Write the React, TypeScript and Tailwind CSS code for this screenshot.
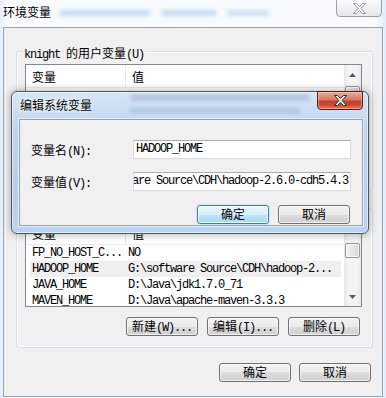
import React from 'react';

const zh = "font-['Noto_Sans_CJK_SC',sans-serif] text-[12px]";
const mono = "font-['Liberation_Mono','Noto_Sans_CJK_SC',monospace] text-[12px] tracking-[-1.2px]";

type Row = { name: string; value: string };

// rows of the user list sit under the edit dialog, nothing of them shows
const userRows: Row[] = [];

const systemRows: Row[] = [
  { name: 'FP_NO_HOST_C...', value: 'NO' },
  { name: 'HADOOP_HOME', value: 'G:\\software Source\\CDH\\hadoop-2...' },
  { name: 'JAVA_HOME', value: 'D:\\Java\\jdk1.7.0_71' },
  { name: 'MAVEN_HOME', value: 'D:\\Java\\apache-maven-3.3.3' },
];

function Label({ cn, en }: { cn: string; en: string }) {
  return (
    <span className={`${zh} leading-[16px] text-black whitespace-nowrap`}>
      {cn}
      <span className={mono}>{en}</span>
    </span>
  );
}

function Btn({ children, primary }: { children: React.ReactNode; primary?: boolean }) {
  return (
    <div
      className={
        primary
          ? 'h-[19px] w-[72px] rounded-[3px] border border-[#3c7fb1] flex items-center justify-center bg-[linear-gradient(to_bottom,#eaf6fd_0%,#d9f0fc_50%,#bee6fd_50%,#a7d9f5_100%)] shadow-[inset_0_0_0_1px_rgba(255,255,255,0.85),0_0_2px_#8fcdf1]'
          : 'h-[19px] w-[72px] rounded-[3px] border border-[#707070] flex items-center justify-center bg-[linear-gradient(to_bottom,#f2f2f2_0%,#ebebeb_50%,#dddddd_50%,#cfcfcf_100%)] shadow-[inset_0_0_0_1px_rgba(255,255,255,0.7)]'
      }
    >
      {children}
    </div>
  );
}

function CloseX({ stroke }: { stroke: string }) {
  return (
    <svg width="13" height="11" viewBox="-0.5 -0.5 13 11">
      <path
        d="M0 0 L3 0 L6 3 L9 0 L12 0 L7.5 5 L12 10 L9 10 L6 7 L3 10 L0 10 L4.5 5 Z"
        fill="#fff"
        stroke={stroke}
        strokeWidth="1"
        strokeLinejoin="round"
      />
    </svg>
  );
}

function Scrollbar({ thumbH }: { thumbH: number }) {
  return (
    <div className="w-[17px] h-full flex flex-col shrink-0 bg-[linear-gradient(to_right,#e6e6e6,#f4f4f4_25%,#f4f4f4_75%,#e9e9e9)]">
      <div className="h-[20px] flex items-center justify-center shrink-0">
        <svg width="7" height="4" viewBox="0 0 7 4">
          <path d="M0 4 L3.5 0 L7 4 Z" fill="#5a5a5a" />
        </svg>
      </div>
      <div
        className="mt-[1px] mx-[1px] shrink-0 rounded-[2px] border border-[#979797] bg-[linear-gradient(to_right,#f3f3f3,#e8e8e8_50%,#d6d6d6)] shadow-[inset_0_0_0_1px_rgba(255,255,255,0.8)]"
        style={{ height: thumbH }}
      />
      <div className="flex-1" />
      <div className="h-[18px] flex items-center justify-center shrink-0">
        <svg width="7" height="4" viewBox="0 0 7 4">
          <path d="M0 0 L3.5 4 L7 0 Z" fill="#5a5a5a" />
        </svg>
      </div>
    </div>
  );
}

function ListView({ rows, thumbH, selected }: { rows: Row[]; thumbH: number; selected?: number }) {
  return (
    <div className="ml-[8px] w-[337px] h-[86px] border border-[#828790] bg-white flex overflow-hidden">
      <div className="flex-1 flex flex-col min-w-0">
        <div className="h-[23px] flex shrink-0 border-b border-[#ececec]">
          <div className={`w-[100px] h-full flex items-center pl-[6px] pt-[2px] border-r border-[#e5e5e5] ${zh} text-black`}>变量</div>
          <div className={`flex items-center pl-[6px] pt-[2px] ${zh} text-black`}>值</div>
        </div>
        {rows.map((r, i) => (
          <div
            key={r.name}
            className={`h-[16px] ml-[4px] w-[311px] flex items-center shrink-0 ${i === selected ? 'bg-[#efefef]' : ''}`}
          >
            <span className={`w-[98px] pl-[2px] whitespace-nowrap ${mono} text-black`}>{r.name}</span>
            <span className={`whitespace-nowrap ${mono} text-black`}>{r.value}</span>
          </div>
        ))}
      </div>
      <Scrollbar thumbH={thumbH} />
    </div>
  );
}

function GroupBox({ title, rows, thumbH, selected, className }: { title: React.ReactNode; rows: Row[]; thumbH: number; selected?: number; className: string }) {
  return (
    <div className={`relative ml-[12px] w-[357px] rounded-[3px] border border-[#d5dfe5] shadow-[inset_0_0_0_1px_#ffffff] pt-[12px] pb-[11px] ${className}`}>
      <div className="absolute left-[6px] -top-[8px] px-[1px] bg-[#f0f0f0] leading-[16px] whitespace-nowrap">{title}</div>
      <ListView rows={rows} thumbH={thumbH} selected={selected} />
      <div className="mt-[10px] flex justify-end gap-[9px] pr-[12px]">
        <Btn><Label cn="新建" en="(W)..." /></Btn>
        <Btn><Label cn="编辑" en="(I)..." /></Btn>
        <Btn><Label cn="删除" en="(L)" /></Btn>
      </div>
    </div>
  );
}

function EditDialog() {
  return (
    <div className="absolute left-[11px] top-[91px] w-[358px] h-[143px] rounded-[6px] border border-[#4d5866] bg-[linear-gradient(to_bottom,#d8e6f6,#bfd5ee_25%,#b6cfeb_70%,#bcd3ee)] shadow-[inset_0_0_0_1px_rgba(255,255,255,0.55),0_0_9px_rgba(0,0,0,0.35)] flex flex-col">
      <div className="h-[27px] flex items-start shrink-0">
        <span className={`ml-[8px] mt-[6px] shrink-0 whitespace-nowrap ${zh} leading-[14px] text-black [text-shadow:0_0_6px_#fff,0_0_3px_#fff]`}>编辑系统变量</span>
        <div className="flex-1 min-w-0 flex flex-col gap-[8px] pt-[3px] pl-[38px] pr-[10px] opacity-60">
          <div className="h-[5px] w-[180px] rounded-full bg-[#8fa7c4] blur-[2px]" />
          <div className="h-[5px] w-[170px] rounded-full bg-[#9ab2ce] blur-[2px]" />
        </div>
        <div className="mr-[5px] -mt-[1px] shrink-0 w-[46px] h-[19px] rounded-b-[4px] border border-[#5c1a13] flex items-center justify-center bg-[linear-gradient(to_bottom,#e9ab9c_0%,#d87864_45%,#c3412a_55%,#c8462d_75%,#e07d62_100%)] shadow-[inset_0_0_0_1px_rgba(255,220,210,0.45)]">
          <CloseX stroke="#3a2420" />
        </div>
      </div>
      <div className="ml-[7px] w-[344px] h-[107px] border border-[#8da2b9] bg-[#f0f0f0] shadow-[0_0_0_1px_#e6f0fa] pt-[17px]">
        <div className="flex items-center">
          <div className="w-[113px] pl-[11px]"><Label cn="变量名" en="(N):" /></div>
          <div className="w-[218px] h-[19px] border border-[#d6dbe1] border-t-[#abadb3] bg-white flex items-center pl-[2px]">
            <span className={`${mono} text-black whitespace-nowrap`}>HADOOP_HOME</span>
          </div>
        </div>
        <div className="mt-[8px] flex items-center">
          <div className="w-[113px] pl-[11px]"><Label cn="变量值" en="(V):" /></div>
          <div className="w-[218px] h-[19px] border border-[#d6dbe1] border-t-[#abadb3] bg-white flex items-center justify-end overflow-hidden pr-[2px]">
            <span className={`${mono} text-black whitespace-nowrap`}>{'G:\\software Source\\CDH\\hadoop-2.6.0-cdh5.4.3'}</span>
          </div>
        </div>
        <div className="mt-[12px] flex justify-end gap-[9px] pr-[12px]">
          <Btn primary><Label cn="确定" en="" /></Btn>
          <Btn><Label cn="取消" en="" /></Btn>
        </div>
      </div>
    </div>
  );
}

export default function App() {
  return (
    <div className="relative w-[386px] h-[398px] overflow-hidden bg-[linear-gradient(to_right,#e3eef9,#f8fbfe_2%,#f8fbfe_97%,#dfeefa)]">
      {/* title bar */}
      <div className="h-[27px] flex items-start">
        <span className={`ml-[3px] mt-[5px] shrink-0 ${zh} text-[12.5px] leading-[14px] text-black [text-shadow:0_0_6px_#fff,0_0_3px_#fff]`}>环境变量</span>
        <div className="ml-[8px] mt-[10px] flex gap-[10px] opacity-80">
          <div className="h-[6px] w-[92px] rounded-full bg-[#b7d3ef] blur-[2px]" />
          <div className="h-[6px] w-[56px] rounded-full bg-[#b7d3ef] blur-[2px]" />
          <div className="h-[6px] w-[42px] rounded-full bg-[#c0d9f1] blur-[2px]" />
        </div>
        <div className="ml-auto mr-[4px] -mt-[1px] w-[46px] h-[18px] rounded-b-[4px] border border-[#9aa1a9] flex items-center justify-center bg-[linear-gradient(to_bottom,#fbfcfd,#eef1f4_50%,#e6eaef)]">
          <CloseX stroke="#8e959d" />
        </div>
      </div>

      {/* client area */}
      <div className="ml-[3px] w-[380px] h-[370px] border border-[#9ba4ae] bg-[#f0f0f0] pt-[23px]">
        <GroupBox
          className=""
          title={
            <span className={`${zh} leading-[16px] text-black`}>
              <span className={mono}>knight </span>的用户变量<span className={mono}>(U)</span>
            </span>
          }
          rows={userRows}
          thumbH={50}
        />
        <GroupBox
          className="mt-[17px]"
          title={<Label cn="系统变量" en="(S)" />}
          rows={systemRows}
          thumbH={15}
          selected={1}
        />
        <div className="mt-[15px] flex justify-end gap-[8px] pr-[11px]">
          <Btn><Label cn="确定" en="" /></Btn>
          <Btn><Label cn="取消" en="" /></Btn>
        </div>
      </div>

      <EditDialog />
    </div>
  );
}
